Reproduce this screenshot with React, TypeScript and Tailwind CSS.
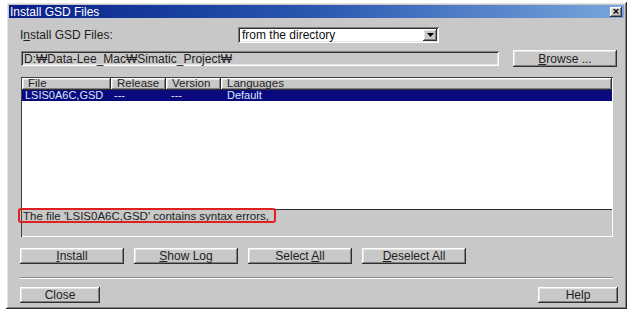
import React from 'react';

const raised =
  'bg-[#c8c8c8] shadow-[inset_-1px_-1px_#303030,inset_1px_1px_#ffffff,inset_-2px_-2px_#808080,inset_2px_2px_#e4e4e4]';
const sunken =
  'shadow-[inset_1px_1px_#808080,inset_-1px_-1px_#ffffff,inset_2px_2px_#303030,inset_-2px_-2px_#e4e4e4]';

const Btn = ({ w, children }: { w: string; children: React.ReactNode }) => (
  <div className={`${w} h-[16px] ${raised} flex items-center justify-center text-[12px] text-[#222]`}>
    {children}
  </div>
);

const HeadCell = ({ w, label }: { w: string; label: string }) => (
  <div className={`${w} h-full ${raised} pl-[6px] flex items-center text-[11.5px] text-[#222]`}>{label}</div>
);

const App = () => {
  return (
    <div className="w-[631px] h-[317px] bg-white pl-[6px] pt-[2px] font-['Liberation_Sans',Arial,'DejaVu_Sans',sans-serif] leading-none">
      <div className={`w-[621px] h-[307px] ${raised} p-[3px] flex flex-col`}>
        {/* title bar */}
        <div className="h-[13px] bg-gradient-to-r from-[#0a1c8a] via-[#2c58b0] to-[#7aa6dc] flex items-center justify-between pl-[1px] pr-[2px]">
          <span className="text-white text-[12px]">Install GSD Files</span>
          <div className={`w-[12px] h-[10px] ${raised} flex items-center justify-center text-[11px] font-bold text-black`}>×</div>
        </div>

        <div className="pl-[11px] pr-[5px] flex flex-col">
          <div className="mt-[9px] h-[16px] flex items-center">
            <span className="text-[12px] text-[#222] w-[218px]">
              I<u>n</u>stall GSD Files:
            </span>
            <div className={`w-[201px] h-[16px] bg-white ${sunken} flex items-center`}>
              <span className="flex-1 pl-[4px] text-[12px] text-[#111]">from the directory</span>
              <div className={`w-[14px] h-[12px] mr-[2px] ${raised} flex items-center justify-center`}>
                <svg width="7" height="4" viewBox="0 0 7 4"><path d="M0 0h7L3.5 4z" fill="#000" /></svg>
              </div>
            </div>
          </div>

          <div className="mt-[7px] h-[17px] flex items-center">
            <div className={`ml-[1px] w-[478px] h-[15px] ${sunken} flex items-center pl-[3px] text-[12px] text-[#222]`}>
              D:₩Data-Lee_Mac₩Simatic_Project₩
            </div>
            <div className="ml-[14px]">
              <Btn w="w-[104px] h-[17px]">
                <span><u>B</u>rowse ...</span>
              </Btn>
            </div>
          </div>

          <div className="relative mt-[10px] ml-[1px] w-[592px] h-[160px] flex flex-col shadow-[inset_1px_1px_#404040,inset_-1px_-1px_#ffffff]">
            <div className="h-[12px] mt-[1px] ml-[1px] mr-[1px] flex">
              <HeadCell w="w-[89px]" label="File" />
              <HeadCell w="w-[55px]" label="Release" />
              <HeadCell w="w-[55px]" label="Version" />
              <HeadCell w="flex-1" label="Languages" />
            </div>
            <div className="flex-1 bg-white mx-[1px]">
              <div className="h-[11px] bg-[#0a0a7e] flex items-center text-[11px] text-[#dde6ff]">
                <span className="w-[89px] pl-[3px]">LSIS0A6C,GSD</span>
                <span className="w-[55px] pl-[3px]">---</span>
                <span className="w-[55px] pl-[5px]">---</span>
                <span className="pl-[6px]">Default</span>
              </div>
            </div>
            <div className="h-[1px] bg-[#303030] mx-[1px]" />
            <div className="h-[27px] pl-[2px] pt-[1px] text-[11.5px] text-[#222]">
              The file 'LSIS0A6C,GSD' contains syntax errors,
            </div>
            <div className="absolute left-[-3px] top-[131px] w-[258px] h-[15px] border-2 border-[#e02020] rounded-[3px]" />
          </div>

          <div className="mt-[11px] flex gap-[10px]">
            <Btn w="w-[104px]"><span><u>I</u>nstall</span></Btn>
            <Btn w="w-[104px]"><span><u>S</u>how Log</span></Btn>
            <Btn w="w-[104px]"><span>Select <u>A</u>ll</span></Btn>
            <Btn w="w-[104px]"><span><u>D</u>eselect All</span></Btn>
          </div>

          <div className="mt-[13px] w-[593px] h-[2px] border-t border-[#8a8a8a] border-b border-b-white" />

          <div className="mt-[8px] flex justify-between pr-[1px]">
            <Btn w="w-[80px] h-[15px]">Close</Btn>
            <Btn w="w-[80px] h-[15px]">Help</Btn>
          </div>
        </div>
      </div>
    </div>
  );
};

export default App;
